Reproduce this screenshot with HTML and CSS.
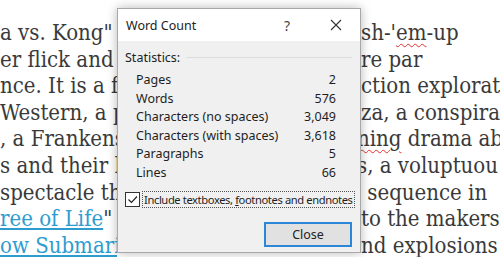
FILE: index.html
```html
<!DOCTYPE html>
<html>
  <head>
    <meta charset="UTF-8">
    <title>Word Count</title>
    <link rel="stylesheet" href="styles.css">
  </head>
  <body>
    <div id="page">
      <div class="text-col left">
        <div class="line">a vs. Kong"</div>
        <div class="line">er flick and a</div>
        <div class="line">nce. It is a fa</div>
        <div class="line">Western, a p</div>
        <div class="line">, a Frankens</div>
        <div class="line">s and their h</div>
        <div class="line">spectacle tha</div>
        <div class="line"><a href="#">ree of Life</a>" h</div>
        <div class="line"><a href="#">ow Submari</a></div>
      </div>

      <div id="dialog">
        <div class="titlebar">
          <span class="title">Word Count</span>
          <span class="help">?</span>
          <span class="close-x">
            <svg width="12" height="12" viewBox="0 0 12 12">
              <path d="M1 1 L11 11 M11 1 L1 11" stroke="#333" stroke-width="1.1" fill="none"/>
            </svg>
          </span>
        </div>
        <div class="body">
          <div class="group-head">
            <span>Statistics:</span>
            <div class="rule"></div>
          </div>
          <div class="stats">
            <div class="row"><span>Pages</span><span>2</span></div>
            <div class="row"><span>Words</span><span>576</span></div>
            <div class="row"><span>Characters (no spaces)</span><span>3,049</span></div>
            <div class="row"><span>Characters (with spaces)</span><span>3,618</span></div>
            <div class="row"><span>Paragraphs</span><span>5</span></div>
            <div class="row"><span>Lines</span><span>66</span></div>
          </div>
          <div class="check-row">
            <span class="checkbox">
              <svg width="13" height="13" viewBox="0 0 13 13">
                <path d="M2.5 6.5 L5.5 9.5 L11 3.5" stroke="#222" stroke-width="1.2" fill="none"/>
              </svg>
            </span>
            <span class="check-label">Include textboxes, <u>f</u>ootnotes and endnotes</span>
          </div>
          <div class="buttons">
            <button class="btn">Close</button>
          </div>
        </div>
      </div>

      <div class="text-col right">
        <div class="line"><span class="cut">a</span>sh-'<span class="squiggle">em</span>-up</div>
        <div class="line"><span class="cut">u</span>re par</div>
        <div class="line"><span class="cut">e</span>ction explorati</div>
        <div class="line"><span class="cut">z</span>za, a conspirac</div>
        <div class="line"><span class="squiggle">ning</span> drama ab</div>
        <div class="line">s, a voluptuou</div>
        <div class="line"><span class="cut">a</span> sequence in</div>
        <div class="line"><span class="cut">t</span>to the makers</div>
        <div class="line"><span class="cut">a</span>nd explosions</div>
      </div>
    </div>
  </body>
</html>
```

FILE: styles.css
```css
/* page behind the dialog */
body {
  margin: 0;
  background: #fff;
  overflow: hidden;
}

#page {
  display: flex;
  width: 500px;
  height: 257px;
  overflow: hidden;
}

.text-col {
  font-family: "DejaVu Serif", Georgia, serif;
  font-stretch: semi-condensed;
  font-size: 22px;
  line-height: 26.6px;
  color: #3a3a3a;
  padding-top: 20px;
  overflow: hidden;
  white-space: nowrap;
}

.text-col.left {
  width: 117px;
  flex: none;
}

.text-col.right {
  flex: 1;
  margin-left: -4px;
}

.text-col a {
  color: #2e9ccf;
  text-decoration: underline;
}

.cut {
  display: inline-block;
  width: 4px;
  overflow: hidden;
  vertical-align: bottom;
  opacity: 0;
}

.squiggle {
  text-decoration: underline wavy #e03030;
  text-decoration-thickness: 1px;
  text-underline-offset: 3px;
}

/* dialog */
#dialog {
  flex: none;
  position: relative;
  z-index: 1;
  width: 242px;
  height: 243px;
  margin-top: 8px;
  border: 1px solid #a8a8a8;
  background: #f0f0f0;
  box-shadow: 0 0 10px rgba(0, 0, 0, 0.28);
  font-family: "Noto Sans", "Open Sans", sans-serif;
  font-size: 12.5px;
  color: #1e1e1e;
  display: flex;
  flex-direction: column;
}

.titlebar {
  height: 32px;
  background: #fff;
  display: flex;
  align-items: center;
  padding-left: 8px;
}

.title {
  font-size: 12.5px;
  flex: 1;
  color: #222;
}

.help {
  font-size: 14px;
  color: #444;
  width: 20px;
  text-align: center;
  margin-right: 29px;
}

.close-x {
  width: 20px;
  display: flex;
  justify-content: center;
  margin-right: 14px;
}

.body {
  flex: 1;
  padding: 7px 8px 0 7px;
}

.group-head {
  display: flex;
  align-items: center;
  gap: 6px;
  height: 18px;
}

.rule {
  flex: 1;
  height: 1px;
  background: #dcdcdc;
}

.stats {
  padding: 5px 16px 0 11px;
}

.row {
  display: flex;
  justify-content: space-between;
  line-height: 18.5px;
}

.check-row {
  display: flex;
  align-items: center;
  margin-top: 8px;
  height: 18px;
  white-space: nowrap;
}

.checkbox {
  flex: none;
  width: 13px;
  height: 13px;
  border: 1px solid #333;
  background: #fff;
  display: flex;
  margin-right: 2px;
}

.check-label {
  border: 1px dotted #555;
  padding: 0 1px;
  line-height: 15px;
  font-size: 11.2px;
  letter-spacing: -0.4px;
}

.buttons {
  display: flex;
  justify-content: flex-end;
  margin-top: 14px;
}

.btn {
  width: 88px;
  height: 25px;
  background: #e1e1e1;
  border: 2px solid #2b86d8;
  font-family: inherit;
  font-size: 12.5px;
  color: #222;
  padding: 0;
}
```
